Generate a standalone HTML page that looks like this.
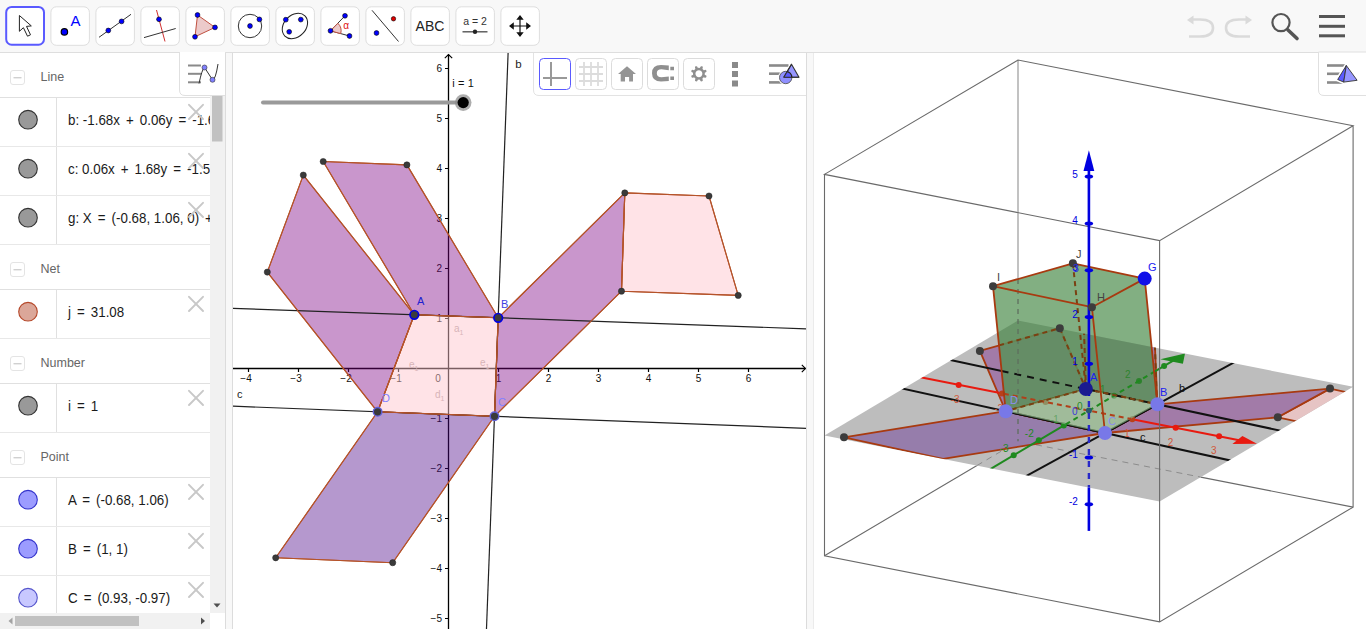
<!DOCTYPE html>
<html><head><meta charset="utf-8"><style>
html,body{margin:0;padding:0;width:1366px;height:631px;overflow:hidden;background:#fff}
svg{position:absolute;left:0;top:0;display:block}
</style></head><body>
<svg width="1366" height="631" viewBox="0 0 1366 631">
<rect x="0" y="0" width="1366" height="52" fill="#f8f8f8"/>
<rect x="0" y="52" width="1366" height="1" fill="#dedede"/>
<rect x="6.2" y="6.9" width="37.8" height="37.8" rx="5.5" fill="#fff" stroke="#5a5aff" stroke-width="2"/>
<rect x="50.9" y="6.8" width="38.5" height="38.5" rx="5.5" fill="#fff" stroke="#dedede" stroke-width="1"/>
<rect x="95.9" y="6.8" width="38.5" height="38.5" rx="5.5" fill="#fff" stroke="#dedede" stroke-width="1"/>
<rect x="140.9" y="6.8" width="38.5" height="38.5" rx="5.5" fill="#fff" stroke="#dedede" stroke-width="1"/>
<rect x="185.9" y="6.8" width="38.5" height="38.5" rx="5.5" fill="#fff" stroke="#dedede" stroke-width="1"/>
<rect x="230.9" y="6.8" width="38.5" height="38.5" rx="5.5" fill="#fff" stroke="#dedede" stroke-width="1"/>
<rect x="275.9" y="6.8" width="38.5" height="38.5" rx="5.5" fill="#fff" stroke="#dedede" stroke-width="1"/>
<rect x="320.9" y="6.8" width="38.5" height="38.5" rx="5.5" fill="#fff" stroke="#dedede" stroke-width="1"/>
<rect x="365.9" y="6.8" width="38.5" height="38.5" rx="5.5" fill="#fff" stroke="#dedede" stroke-width="1"/>
<rect x="410.9" y="6.8" width="38.5" height="38.5" rx="5.5" fill="#fff" stroke="#dedede" stroke-width="1"/>
<rect x="455.9" y="6.8" width="38.5" height="38.5" rx="5.5" fill="#fff" stroke="#dedede" stroke-width="1"/>
<rect x="500.9" y="6.8" width="38.5" height="38.5" rx="5.5" fill="#fff" stroke="#dedede" stroke-width="1"/>
<path d="M19.4 15.5 L19.4 31.3 L23.4 27.7 L27.5 36.2 L30.5 34.8 L26.5 26.4 L31.3 25.9 Z" fill="#fff" stroke="#222" stroke-width="1" stroke-linejoin="round"/>
<circle cx="64.4" cy="31.9" r="3.2" fill="#0000ff" stroke="#000" stroke-width="1.2"/>
<text x="75.6" y="25.8" font-family='"Liberation Sans", sans-serif' font-size="15" fill="#0000ff" text-anchor="middle">A</text>
<line x1="99" y1="37.3" x2="131" y2="14.3" stroke="#333" stroke-width="1"/>
<circle cx="108.3" cy="30.5" r="2.4" fill="#0000ff" stroke="#000" stroke-width="0.6"/>
<circle cx="121.6" cy="21.4" r="2.4" fill="#0000ff" stroke="#000" stroke-width="0.6"/>
<line x1="156.5" y1="10" x2="165" y2="41.5" stroke="#d03030" stroke-width="1"/>
<line x1="144" y1="37.6" x2="175.7" y2="28.5" stroke="#333" stroke-width="1"/>
<circle cx="159" cy="19.3" r="2.4" fill="#0000ff" stroke="#000" stroke-width="0.6"/>
<polygon points="197.5,15 215,27.4 195,36.8" fill="#eccaca" stroke="#c05040" stroke-width="1"/>
<circle cx="197.5" cy="15" r="2.4" fill="#0000ff" stroke="#000" stroke-width="0.6"/>
<circle cx="215" cy="27.4" r="2.4" fill="#0000ff" stroke="#000" stroke-width="0.6"/>
<circle cx="195" cy="36.8" r="2.4" fill="#0000ff" stroke="#000" stroke-width="0.6"/>
<circle cx="250" cy="26" r="11.7" fill="none" stroke="#333" stroke-width="1"/>
<circle cx="250" cy="26" r="2.4" fill="#0000ff" stroke="#000" stroke-width="0.6"/>
<circle cx="259.4" cy="19.4" r="2.4" fill="#0000ff" stroke="#000" stroke-width="0.6"/>
<ellipse cx="294.9" cy="26" rx="14.2" ry="10.9" transform="rotate(-45 294.9 26)" fill="none" stroke="#222" stroke-width="1"/>
<circle cx="285.8" cy="19.7" r="2.4" fill="#0000ff" stroke="#000" stroke-width="0.6"/>
<circle cx="300.8" cy="19.6" r="2.4" fill="#0000ff" stroke="#000" stroke-width="0.6"/>
<circle cx="289.2" cy="31.8" r="2.4" fill="#0000ff" stroke="#000" stroke-width="0.6"/>
<path d="M330.5 30.8 L345 15.8 M330.5 30.8 L349.5 36" stroke="#333" stroke-width="1" fill="none"/>
<path d="M330.5 30.8 L337.9 23.3 A10.5 10.5 0 0 1 340.7 33.6 Z" fill="#eccaca" stroke="#c05040" stroke-width="1"/>
<text x="343.3" y="28.7" font-family='"Liberation Sans", sans-serif' font-size="10" fill="#e01010">α</text>
<circle cx="330.5" cy="30.8" r="2.4" fill="#0000ff" stroke="#000" stroke-width="0.6"/>
<circle cx="345" cy="15.8" r="2.4" fill="#0000ff" stroke="#000" stroke-width="0.6"/>
<circle cx="349.5" cy="36" r="2.4" fill="#0000ff" stroke="#000" stroke-width="0.6"/>
<line x1="372" y1="10.3" x2="398.5" y2="41.5" stroke="#333" stroke-width="1"/>
<circle cx="376.5" cy="33" r="2.4" fill="#0000ff" stroke="#000" stroke-width="0.6"/>
<circle cx="393.5" cy="18.8" r="2.2" fill="#e00000" stroke="#000" stroke-width="0.6"/>
<text x="430" y="31" font-family='"Liberation Sans", sans-serif' font-size="14" fill="#222" text-anchor="middle">ABC</text>
<text x="475" y="24.5" font-family='"Liberation Sans", sans-serif' font-size="10.5" fill="#333" text-anchor="middle">a = 2</text>
<line x1="462.5" y1="31.8" x2="487.5" y2="31.8" stroke="#555" stroke-width="1.4"/>
<circle cx="475" cy="31.8" r="2.2" fill="#222"/>
<path d="M520 16.5 L520 35.5 M510.5 26 L529.5 26" stroke="#111" stroke-width="1.2"/>
<path d="M520 15 L516.3 19.8 L523.7 19.8 Z M520 37 L516.3 32.2 L523.7 32.2 Z M509 26 L513.8 22.3 L513.8 29.7 Z M531 26 L526.2 22.3 L526.2 29.7 Z" fill="#111"/>
<path d="M1190 19.5 L1200 19.5 Q1213 19.5 1213 28 Q1213 36.5 1200 36.5 L1189 36.5" fill="none" stroke="#dadada" stroke-width="2.6"/>
<path d="M1187 20 L1193.5 15.5 L1193.5 24.5 Z" fill="#dadada"/>
<path d="M1249 19.5 L1239 19.5 Q1226 19.5 1226 28 Q1226 36.5 1239 36.5 L1250 36.5" fill="none" stroke="#dadada" stroke-width="2.6"/>
<path d="M1252 20 L1245.5 15.5 L1245.5 24.5 Z" fill="#dadada"/>
<circle cx="1281" cy="22.6" r="8.6" fill="none" stroke="#555" stroke-width="2.2"/>
<line x1="1288" y1="30" x2="1297" y2="38.5" stroke="#555" stroke-width="3.6" stroke-linecap="round"/>
<rect x="1319" y="15.0" width="26" height="3" fill="#555"/>
<rect x="1319" y="24.8" width="26" height="3" fill="#555"/>
<rect x="1319" y="34.3" width="26" height="3" fill="#555"/>
<rect x="0" y="53" width="226" height="578" fill="#fff"/>
<defs><clipPath id="algclip"><rect x="0" y="53" width="210" height="560"/></clipPath></defs>
<g clip-path="url(#algclip)">
<rect x="10.5" y="70.5" width="14" height="14" rx="2.5" fill="#fff" stroke="#e4e4e4"/>
<rect x="13.5" y="77" width="8" height="1.4" fill="#d0d0d0"/>
<text x="40.5" y="81" font-family='"Liberation Sans", sans-serif' font-size="12.5" fill="#666">Line</text>
<rect x="0" y="97" width="210" height="1" fill="#e0e0e0"/>
<circle cx="28" cy="119.7" r="9.3" fill="#999" stroke="#333" stroke-width="1.1"/>
<rect x="56" y="98" width="1" height="48" fill="#e0e0e0"/>
<text transform="translate(68 124.8) scale(0.89 1)" x="0" y="0" font-family='"Liberation Sans", sans-serif' font-size="15" fill="#1a1a1a">b: -1.68x <tspan dx="2.6">+</tspan><tspan dx="2.6"> </tspan>0.06y <tspan dx="2.6">=</tspan><tspan dx="2.6"> </tspan>-1.6</text>
<rect x="0" y="146" width="210" height="1" fill="#e8e8e8"/>
<path d="M189 104.8 L203 119 M203 104.8 L189 119" stroke="#c8c8c8" stroke-width="1.9" stroke-linecap="round"/>
<circle cx="28" cy="168.7" r="9.3" fill="#999" stroke="#333" stroke-width="1.1"/>
<rect x="56" y="147" width="1" height="48" fill="#e0e0e0"/>
<text transform="translate(68 173.8) scale(0.89 1)" x="0" y="0" font-family='"Liberation Sans", sans-serif' font-size="15" fill="#1a1a1a">c: 0.06x <tspan dx="2.6">+</tspan><tspan dx="2.6"> </tspan>1.68y <tspan dx="2.6">=</tspan><tspan dx="2.6"> </tspan>-1.57</text>
<rect x="0" y="195" width="210" height="1" fill="#e8e8e8"/>
<path d="M189 153.8 L203 168 M203 153.8 L189 168" stroke="#c8c8c8" stroke-width="1.9" stroke-linecap="round"/>
<circle cx="28" cy="217.7" r="9.3" fill="#999" stroke="#333" stroke-width="1.1"/>
<rect x="56" y="196" width="1" height="48" fill="#e0e0e0"/>
<text transform="translate(68 222.8) scale(0.89 1)" x="0" y="0" font-family='"Liberation Sans", sans-serif' font-size="15" fill="#1a1a1a">g: X <tspan dx="2.6">=</tspan><tspan dx="2.6"> </tspan>(-0.68, 1.06, 0) <tspan dx="2.6">+</tspan><tspan dx="2.6"> </tspan>λ</text>
<rect x="0" y="244" width="210" height="1" fill="#e8e8e8"/>
<path d="M189 202.8 L203 217 M203 202.8 L189 217" stroke="#c8c8c8" stroke-width="1.9" stroke-linecap="round"/>
<rect x="10.5" y="262.5" width="14" height="14" rx="2.5" fill="#fff" stroke="#e4e4e4"/>
<rect x="13.5" y="269" width="8" height="1.4" fill="#d0d0d0"/>
<text x="40.5" y="273" font-family='"Liberation Sans", sans-serif' font-size="12.5" fill="#666">Net</text>
<rect x="0" y="289" width="210" height="1" fill="#e0e0e0"/>
<circle cx="28" cy="311.7" r="9.3" fill="#dba799" stroke="#b5482a" stroke-width="1.1"/>
<rect x="56" y="290" width="1" height="48" fill="#e0e0e0"/>
<text transform="translate(68 316.8) scale(0.89 1)" x="0" y="0" font-family='"Liberation Sans", sans-serif' font-size="15" fill="#1a1a1a">j <tspan dx="2.6">=</tspan><tspan dx="2.6"> </tspan>31.08</text>
<rect x="0" y="338" width="210" height="1" fill="#e8e8e8"/>
<path d="M189 296.8 L203 311 M203 296.8 L189 311" stroke="#c8c8c8" stroke-width="1.9" stroke-linecap="round"/>
<rect x="10.5" y="356.5" width="14" height="14" rx="2.5" fill="#fff" stroke="#e4e4e4"/>
<rect x="13.5" y="363" width="8" height="1.4" fill="#d0d0d0"/>
<text x="40.5" y="367" font-family='"Liberation Sans", sans-serif' font-size="12.5" fill="#666">Number</text>
<rect x="0" y="383" width="210" height="1" fill="#e0e0e0"/>
<circle cx="28" cy="405.7" r="9.3" fill="#999" stroke="#333" stroke-width="1.1"/>
<rect x="56" y="384" width="1" height="48" fill="#e0e0e0"/>
<text transform="translate(68 410.8) scale(0.89 1)" x="0" y="0" font-family='"Liberation Sans", sans-serif' font-size="15" fill="#1a1a1a">i <tspan dx="2.6">=</tspan><tspan dx="2.6"> </tspan>1</text>
<rect x="0" y="432" width="210" height="1" fill="#e8e8e8"/>
<path d="M189 390.8 L203 405 M203 390.8 L189 405" stroke="#c8c8c8" stroke-width="1.9" stroke-linecap="round"/>
<rect x="10.5" y="450.5" width="14" height="14" rx="2.5" fill="#fff" stroke="#e4e4e4"/>
<rect x="13.5" y="457" width="8" height="1.4" fill="#d0d0d0"/>
<text x="40.5" y="461" font-family='"Liberation Sans", sans-serif' font-size="12.5" fill="#666">Point</text>
<rect x="0" y="477" width="210" height="1" fill="#e0e0e0"/>
<circle cx="28" cy="499.7" r="9.3" fill="#9c9cff" stroke="#3333cc" stroke-width="1.1"/>
<rect x="56" y="478" width="1" height="48" fill="#e0e0e0"/>
<text transform="translate(68 504.8) scale(0.89 1)" x="0" y="0" font-family='"Liberation Sans", sans-serif' font-size="15" fill="#1a1a1a">A <tspan dx="2.6">=</tspan><tspan dx="2.6"> </tspan>(-0.68, 1.06)</text>
<rect x="0" y="526" width="210" height="1" fill="#e8e8e8"/>
<path d="M189 484.8 L203 499 M203 484.8 L189 499" stroke="#c8c8c8" stroke-width="1.9" stroke-linecap="round"/>
<circle cx="28" cy="548.7" r="9.3" fill="#9c9cff" stroke="#3333cc" stroke-width="1.1"/>
<rect x="56" y="527" width="1" height="48" fill="#e0e0e0"/>
<text transform="translate(68 553.8) scale(0.89 1)" x="0" y="0" font-family='"Liberation Sans", sans-serif' font-size="15" fill="#1a1a1a">B <tspan dx="2.6">=</tspan><tspan dx="2.6"> </tspan>(1, 1)</text>
<rect x="0" y="575" width="210" height="1" fill="#e8e8e8"/>
<path d="M189 533.8 L203 548 M203 533.8 L189 548" stroke="#c8c8c8" stroke-width="1.9" stroke-linecap="round"/>
<circle cx="28" cy="597.7" r="9.3" fill="#c8c8ff" stroke="#5555cc" stroke-width="1.1"/>
<rect x="56" y="576" width="1" height="48" fill="#e0e0e0"/>
<text transform="translate(68 602.8) scale(0.89 1)" x="0" y="0" font-family='"Liberation Sans", sans-serif' font-size="15" fill="#1a1a1a">C <tspan dx="2.6">=</tspan><tspan dx="2.6"> </tspan>(0.93, -0.97)</text>
<rect x="0" y="624" width="210" height="1" fill="#e8e8e8"/>
<path d="M189 582.8 L203 597 M203 582.8 L189 597" stroke="#c8c8c8" stroke-width="1.9" stroke-linecap="round"/>
</g>
<rect x="210" y="53" width="16" height="560" fill="#f1f1f1"/>
<rect x="212" y="95" width="10.5" height="46.5" fill="#c1c1c1"/>
<path d="M213.5 603.5 L220.5 603.5 L217 607.5 Z" fill="#505050"/>
<rect x="0" y="613" width="210" height="16" fill="#f1f1f1"/>
<rect x="15" y="616" width="124" height="10" fill="#c1c1c1"/>
<path d="M8.5 621 L12.5 617.5 L12.5 624.5 Z" fill="#a3a3a3"/>
<path d="M205 621 L201 617.5 L201 624.5 Z" fill="#505050"/>
<rect x="210" y="613" width="16" height="18" fill="#fff"/>
<path d="M179.5 52 L179.5 90 Q179.5 95.5 185 95.5 L225.5 95.5 L225.5 52" fill="#fff" stroke="#e0e0e0" stroke-width="1"/>
<rect x="188" y="64.5" width="13" height="2" fill="#8a8a8a"/>
<rect x="188" y="72.8" width="13" height="2" fill="#8a8a8a"/>
<rect x="188" y="81.3" width="13" height="2" fill="#8a8a8a"/>
<path d="M199 83.5 Q202 69 204.5 67.5 L212.5 79.8 Q215.5 80 218 64" fill="none" stroke="#333" stroke-width="1"/>
<circle cx="204.5" cy="67.5" r="2.5" fill="#8080ff" stroke="#333" stroke-width="0.6"/>
<circle cx="212.5" cy="79.8" r="2.5" fill="#8080ff" stroke="#333" stroke-width="0.6"/>
<rect x="225" y="53" width="1" height="576" fill="#dcdcdc"/>
<rect x="226" y="53" width="6.5" height="576" fill="#f8f8f8"/>
<rect x="232" y="53" width="1" height="576" fill="#dcdcdc"/>
<defs><clipPath id="gclip"><rect x="233" y="53" width="573" height="576"/></clipPath></defs>
<g clip-path="url(#gclip)">
<rect x="233" y="53" width="573" height="578" fill="#fff"/>
<line x1="233" y1="368.5" x2="805.5" y2="368.5" stroke="#000" stroke-width="1.3"/>
<line x1="448.5" y1="631" x2="448.5" y2="54.5" stroke="#000" stroke-width="1.3"/>
<path d="M801.8 364.8 L805.5 368.5 L801.8 372.2 M444.8 58.2 L448.5 54.5 L452.2 58.2" fill="none" stroke="#000" stroke-width="1.1"/>
<path d="M248.5 368.5 L248.5 372.0 M298.5 368.5 L298.5 372.0 M348.5 368.5 L348.5 372.0 M398.5 368.5 L398.5 372.0 M498.5 368.5 L498.5 372.0 M548.5 368.5 L548.5 372.0 M598.5 368.5 L598.5 372.0 M648.5 368.5 L648.5 372.0 M698.5 368.5 L698.5 372.0 M748.5 368.5 L748.5 372.0 M448.5 618.5 L445.0 618.5 M448.5 568.5 L445.0 568.5 M448.5 518.5 L445.0 518.5 M448.5 468.5 L445.0 468.5 M448.5 418.5 L445.0 418.5 M448.5 318.5 L445.0 318.5 M448.5 268.5 L445.0 268.5 M448.5 218.5 L445.0 218.5 M448.5 168.5 L445.0 168.5 M448.5 118.5 L445.0 118.5 M448.5 68.5 L445.0 68.5" stroke="#000" stroke-width="1.2"/>
<text x="246.0" y="382" font-family='"Liberation Sans", sans-serif' font-size="10" fill="#111" text-anchor="middle">−4</text>
<text x="296.0" y="382" font-family='"Liberation Sans", sans-serif' font-size="10" fill="#111" text-anchor="middle">−3</text>
<text x="346.0" y="382" font-family='"Liberation Sans", sans-serif' font-size="10" fill="#111" text-anchor="middle">−2</text>
<text x="396.0" y="382" font-family='"Liberation Sans", sans-serif' font-size="10" fill="#111" text-anchor="middle">−1</text>
<text x="498.5" y="382" font-family='"Liberation Sans", sans-serif' font-size="10" fill="#111" text-anchor="middle">1</text>
<text x="548.5" y="382" font-family='"Liberation Sans", sans-serif' font-size="10" fill="#111" text-anchor="middle">2</text>
<text x="598.5" y="382" font-family='"Liberation Sans", sans-serif' font-size="10" fill="#111" text-anchor="middle">3</text>
<text x="648.5" y="382" font-family='"Liberation Sans", sans-serif' font-size="10" fill="#111" text-anchor="middle">4</text>
<text x="698.5" y="382" font-family='"Liberation Sans", sans-serif' font-size="10" fill="#111" text-anchor="middle">5</text>
<text x="748.5" y="382" font-family='"Liberation Sans", sans-serif' font-size="10" fill="#111" text-anchor="middle">6</text>
<text x="438" y="382" font-family='"Liberation Sans", sans-serif' font-size="10" fill="#111" text-anchor="middle">0</text>
<text x="442" y="622.1" font-family='"Liberation Sans", sans-serif' font-size="10" fill="#111" text-anchor="end">−5</text>
<text x="442" y="572.1" font-family='"Liberation Sans", sans-serif' font-size="10" fill="#111" text-anchor="end">−4</text>
<text x="442" y="522.1" font-family='"Liberation Sans", sans-serif' font-size="10" fill="#111" text-anchor="end">−3</text>
<text x="442" y="472.1" font-family='"Liberation Sans", sans-serif' font-size="10" fill="#111" text-anchor="end">−2</text>
<text x="442" y="422.1" font-family='"Liberation Sans", sans-serif' font-size="10" fill="#111" text-anchor="end">−1</text>
<text x="442" y="322.1" font-family='"Liberation Sans", sans-serif' font-size="10" fill="#111" text-anchor="end">1</text>
<text x="442" y="272.1" font-family='"Liberation Sans", sans-serif' font-size="10" fill="#111" text-anchor="end">2</text>
<text x="442" y="222.1" font-family='"Liberation Sans", sans-serif' font-size="10" fill="#111" text-anchor="end">3</text>
<text x="442" y="172.1" font-family='"Liberation Sans", sans-serif' font-size="10" fill="#111" text-anchor="end">4</text>
<text x="442" y="122.1" font-family='"Liberation Sans", sans-serif' font-size="10" fill="#111" text-anchor="end">5</text>
<text x="442" y="72.1" font-family='"Liberation Sans", sans-serif' font-size="10" fill="#111" text-anchor="end">6</text>
<polygon points="414.3,314.8 377.6,411.8 267.3,272.1 303.3,175.1" fill="rgb(123,1,131)" fill-opacity="0.41" stroke="#b5532a" stroke-width="1.1" stroke-linejoin="round"/>
<polygon points="414.3,314.8 498.2,317.8 406.9,164.9 323.2,161.5" fill="rgb(123,1,131)" fill-opacity="0.41" stroke="#b5532a" stroke-width="1.1" stroke-linejoin="round"/>
<polygon points="498.2,317.8 624.8,192.9 621.5,291.2 494.5,416.3" fill="rgb(123,1,131)" fill-opacity="0.41" stroke="#b5532a" stroke-width="1.1" stroke-linejoin="round"/>
<polygon points="624.8,192.9 709.0,196.0 738.2,295.4 621.5,291.2" fill="rgb(255,197,205)" fill-opacity="0.48" stroke="#b5532a" stroke-width="1.1" stroke-linejoin="round"/>
<polygon points="377.6,411.8 494.5,416.3 392.7,562.7 275.7,557.8" fill="rgb(75,6,135)" fill-opacity="0.41" stroke="#b5532a" stroke-width="1.1" stroke-linejoin="round"/>
<polygon points="414.3,314.8 498.2,317.8 494.5,416.3 377.6,411.8" fill="rgb(255,197,205)" fill-opacity="0.48" stroke="#b5532a" stroke-width="1.1" stroke-linejoin="round"/>
<line x1="233.0" y1="308.3" x2="806.0" y2="328.8" stroke="#222" stroke-width="1.2"/>
<line x1="233.0" y1="406.2" x2="806.0" y2="428.3" stroke="#222" stroke-width="1.2"/>
<line x1="508.1" y1="53.0" x2="486.4" y2="631.0" stroke="#222" stroke-width="1.2"/>
<polygon points="414.3,314.8 377.6,411.8 267.3,272.1 303.3,175.1" fill="none" stroke="#b5532a" stroke-width="1.1" stroke-linejoin="round"/>
<polygon points="414.3,314.8 498.2,317.8 406.9,164.9 323.2,161.5" fill="none" stroke="#b5532a" stroke-width="1.1" stroke-linejoin="round"/>
<polygon points="498.2,317.8 624.8,192.9 621.5,291.2 494.5,416.3" fill="none" stroke="#b5532a" stroke-width="1.1" stroke-linejoin="round"/>
<polygon points="624.8,192.9 709.0,196.0 738.2,295.4 621.5,291.2" fill="none" stroke="#b5532a" stroke-width="1.1" stroke-linejoin="round"/>
<polygon points="377.6,411.8 494.5,416.3 392.7,562.7 275.7,557.8" fill="none" stroke="#b5532a" stroke-width="1.1" stroke-linejoin="round"/>
<polygon points="414.3,314.8 498.2,317.8 494.5,416.3 377.6,411.8" fill="none" stroke="#b5532a" stroke-width="1.1" stroke-linejoin="round"/>
<text x="515.2" y="68.2" font-family='"Liberation Sans", sans-serif' font-size="11.5" fill="#222">b</text>
<text x="237" y="398" font-family='"Liberation Sans", sans-serif' font-size="11" fill="#222">c</text>
<text x="454" y="332" font-family='"Liberation Sans", sans-serif' font-size="10" fill="#d7b4b8">a<tspan font-size="7" dy="3">1</tspan></text>
<text x="409" y="368" font-family='"Liberation Sans", sans-serif' font-size="10" fill="#d7b4b8">e<tspan font-size="7" dy="3">1</tspan></text>
<text x="480" y="366" font-family='"Liberation Sans", sans-serif' font-size="10" fill="#d7b4b8">e<tspan font-size="7" dy="3">1</tspan></text>
<text x="435" y="398" font-family='"Liberation Sans", sans-serif' font-size="10" fill="#d7b4b8">d<tspan font-size="7" dy="3">1</tspan></text>
<line x1="263" y1="102.5" x2="463" y2="102.5" stroke="#9a9a9a" stroke-width="4" stroke-linecap="round"/>
<circle cx="463.2" cy="102.6" r="8.3" fill="#8a8a8a" fill-opacity="0.7"/>
<circle cx="463.2" cy="102.6" r="5.6" fill="#000"/>
<text x="452.3" y="86.6" font-family='"Liberation Sans", sans-serif' font-size="11" fill="#111" textLength="21.5" lengthAdjust="spacing">i = 1</text>
<circle cx="303.3" cy="175.1" r="3.1" fill="#3a3a3a" stroke="#222" stroke-width="0.5"/>
<circle cx="267.3" cy="272.1" r="3.1" fill="#3a3a3a" stroke="#222" stroke-width="0.5"/>
<circle cx="323.2" cy="161.5" r="3.1" fill="#3a3a3a" stroke="#222" stroke-width="0.5"/>
<circle cx="406.9" cy="164.9" r="3.1" fill="#3a3a3a" stroke="#222" stroke-width="0.5"/>
<circle cx="624.8" cy="192.9" r="3.1" fill="#3a3a3a" stroke="#222" stroke-width="0.5"/>
<circle cx="709" cy="196" r="3.1" fill="#3a3a3a" stroke="#222" stroke-width="0.5"/>
<circle cx="738.2" cy="295.4" r="3.1" fill="#3a3a3a" stroke="#222" stroke-width="0.5"/>
<circle cx="621.5" cy="291.2" r="3.1" fill="#3a3a3a" stroke="#222" stroke-width="0.5"/>
<circle cx="275.7" cy="557.8" r="3.1" fill="#3a3a3a" stroke="#222" stroke-width="0.5"/>
<circle cx="392.7" cy="562.7" r="3.1" fill="#3a3a3a" stroke="#222" stroke-width="0.5"/>
<circle cx="414.3" cy="314.8" r="4.3" fill="#3c3c3c" stroke="#0000e0" stroke-width="1.7"/>
<circle cx="498.2" cy="317.8" r="4.3" fill="#3c3c3c" stroke="#0000e0" stroke-width="1.7"/>
<circle cx="494.5" cy="416.3" r="4.3" fill="#3a3a3a" stroke="#6060d8" stroke-width="1.4"/>
<circle cx="377.6" cy="411.8" r="4.3" fill="#3a3a3a" stroke="#6060d8" stroke-width="1.4"/>
<text x="417" y="305" font-family='"Liberation Sans", sans-serif' font-size="11" fill="#2020d0">A</text>
<text x="501" y="308" font-family='"Liberation Sans", sans-serif' font-size="11" fill="#4040e0">B</text>
<text x="498" y="406" font-family='"Liberation Sans", sans-serif' font-size="11" fill="#8080ff">C</text>
<text x="382" y="402" font-family='"Liberation Sans", sans-serif' font-size="11" fill="#8080ff">D</text>
</g>
<path d="M533.5 53 L533.5 90 Q533.5 95.5 539 95.5 L806 95.5" fill="#fff" stroke="#e3e3e3" stroke-width="1"/>
<rect x="539.5" y="58.5" width="31" height="31" rx="4" fill="#fff" stroke="#5a5aff" stroke-width="1"/>
<rect x="575.5" y="58.5" width="31" height="31" rx="4" fill="#fff" stroke="#dcdcdc" stroke-width="1"/>
<rect x="611.5" y="58.5" width="31" height="31" rx="4" fill="#fff" stroke="#dcdcdc" stroke-width="1"/>
<rect x="647.5" y="58.5" width="31" height="31" rx="4" fill="#fff" stroke="#dcdcdc" stroke-width="1"/>
<rect x="683.5" y="58.5" width="31" height="31" rx="4" fill="#fff" stroke="#dcdcdc" stroke-width="1"/>
<path d="M551 62 L551 86 M543 78 L567 78" stroke="#999" stroke-width="2"/>
<path d="M584 62 L584 86 M591 62 L591 86 M598 62 L598 86 M579 67 L603 67 M579 74 L603 74 M579 81 L603 81" stroke="#dcdcdc" stroke-width="1.8"/>
<path d="M627 66.3 L618 73.9 L620.7 73.9 L620.7 81.6 L625 81.6 L625 76.9 L629.1 76.9 L629.1 81.6 L633 81.6 L633 73.9 L636 73.9 Z" fill="#959595"/>
<path d="M668.8 65.6 L661 65.1 Q652 65.1 652 73.3 Q652 81.6 661 81.6 L668.8 81 L668.8 76.4 L661.5 77.3 Q656.8 77.3 656.8 73.3 Q656.8 69.2 661.5 69.2 L668.8 70.2 Z" fill="#8f8f8f"/>
<path d="M670.3 66.8 h3.7 v3.5 h-3.7z M670.3 76.4 h3.7 v3.5 h-3.7z" fill="#8f8f8f"/>
<g transform="translate(698.9 73.8)"><circle r="4.7" fill="none" stroke="#8f8f8f" stroke-width="2.5"/><rect x="-1.3" y="-8.1" width="2.6" height="4" rx="1.2" fill="#8f8f8f" transform="rotate(22.5)"/><rect x="-1.3" y="-8.1" width="2.6" height="4" rx="1.2" fill="#8f8f8f" transform="rotate(67.5)"/><rect x="-1.3" y="-8.1" width="2.6" height="4" rx="1.2" fill="#8f8f8f" transform="rotate(112.5)"/><rect x="-1.3" y="-8.1" width="2.6" height="4" rx="1.2" fill="#8f8f8f" transform="rotate(157.5)"/><rect x="-1.3" y="-8.1" width="2.6" height="4" rx="1.2" fill="#8f8f8f" transform="rotate(202.5)"/><rect x="-1.3" y="-8.1" width="2.6" height="4" rx="1.2" fill="#8f8f8f" transform="rotate(247.5)"/><rect x="-1.3" y="-8.1" width="2.6" height="4" rx="1.2" fill="#8f8f8f" transform="rotate(292.5)"/><rect x="-1.3" y="-8.1" width="2.6" height="4" rx="1.2" fill="#8f8f8f" transform="rotate(337.5)"/></g>
<rect x="732" y="62" width="6" height="6" fill="#8a8a8a"/><rect x="732" y="71" width="6" height="6" fill="#8a8a8a"/><rect x="732" y="80.5" width="6" height="6" fill="#8a8a8a"/>
<rect x="769" y="64.2" width="19.5" height="2.6" fill="#8a8a8a"/><rect x="769" y="72.4" width="14" height="2.6" fill="#8a8a8a"/><rect x="769" y="81.1" width="14" height="2.6" fill="#8a8a8a"/>
<circle cx="785.7" cy="77.5" r="7.6" fill="#fff"/>
<polygon points="791.5,64.2 783.8,77.3 799,77.3" fill="#fff" stroke="#fff" stroke-width="3" stroke-linejoin="round"/>
<circle cx="785.7" cy="77.5" r="6.2" fill="#9090ff" stroke="#555" stroke-width="0.9"/>
<polygon points="791.5,64.2 783.8,77.3 799,77.3" fill="#9696ff" stroke="#333" stroke-width="1.1" stroke-linejoin="round"/>
<defs><clipPath id="tclip"><polygon points="791.5,64.2 783.8,77.3 799,77.3"/></clipPath></defs>
<circle cx="785.7" cy="77.5" r="5.6" fill="#5a5aff" clip-path="url(#tclip)"/>
<path d="M783.8 77.3 L799 77.3 M791.5 64.2 L783.8 77.3" stroke="#333" stroke-width="1.1" fill="none"/>
<circle cx="785.7" cy="77.5" r="6.2" stroke="#222" stroke-width="1.3" fill="none" clip-path="url(#tclip)"/>
<rect x="806" y="53" width="1" height="576" fill="#dcdcdc"/>
<rect x="807" y="53" width="6.5" height="576" fill="#f8f8f8"/>
<rect x="813.5" y="53" width="1" height="576" fill="#dcdcdc"/>
<defs><clipPath id="v3clip"><rect x="814" y="53" width="552" height="576"/></clipPath>
<clipPath id="plclip"><polygon points="824.5,435.4 1159.6,501.6 1353.1,386.8 1018.0,320.6"/></clipPath></defs>
<g clip-path="url(#v3clip)">
<rect x="814" y="53" width="552" height="578" fill="#fff"/>
<path d="M1018 60 L1018 279" stroke="#a8a8a8" stroke-width="1.4" fill="none"/>
<path d="M824.5 555.7 L977 465.5 M1200.7 477.1 L1353.1 507.1" stroke="#6a6a6a" stroke-width="1.1" fill="none"/>
<polygon points="824.5,435.4 1159.6,501.6 1353.1,386.8 1018.0,320.6" fill="#bdbdbd"/>
<path d="M977 465.5 L1018 441.3 L1200.7 477.1" stroke="#8c8c8c" stroke-width="1" stroke-dasharray="6 5" fill="none"/>
<mask id="outbox" maskUnits="userSpaceOnUse" x="814" y="53" width="552" height="578"><rect x="814" y="53" width="552" height="578" fill="#fff"/><polygon points="993.0,286.2 1072.9,263.3 1144.7,278.6 1157.4,404.3 1105.0,433.0 1005.7,411.2" fill="#000"/></mask>
<mask id="dimbox" maskUnits="userSpaceOnUse" x="814" y="53" width="552" height="578"><rect x="814" y="53" width="552" height="578" fill="#fff"/><polygon points="993.0,286.2 1072.9,263.3 1144.7,278.6 1157.4,404.3 1105.0,433.0 1005.7,411.2" fill="#555"/></mask>
<g clip-path="url(#plclip)"><g mask="url(#dimbox)">
<polygon points="1330.0,388.6 1401.5,404.0 1377.1,438.5 1277.8,417.3" fill="#e6c4c4" stroke="#a83a10" stroke-width="1.8"/>
<polygon points="1005.7,411.2 1105.0,433.0 943.1,458.8 844.0,437.3" fill="#967dab" stroke="#a83a10" stroke-width="1.8" stroke-linejoin="round"/>
<polygon points="1157.4,404.3 1330.0,388.6 1277.8,417.3 1105.0,433.0" fill="#a27ba8" stroke="#a83a10" stroke-width="1.8" stroke-linejoin="round"/>
<polygon points="1085.9,389.0 1005.7,411.2 979.9,350.9 1059.8,328.2" fill="#a27ba8" stroke="#a83a10" stroke-width="1.8" stroke-linejoin="round"/>
<polygon points="1085.9,389.0 1157.4,404.3 1154.8,342.9 1083.9,327.5" fill="#a27ba8" stroke="#a83a10" stroke-width="1.8" stroke-linejoin="round"/>
</g>
<polygon points="1085.9,389.0 1157.4,404.3 1105.0,433.0 1005.7,411.2" fill="#f2dede" stroke="#a83a10" stroke-width="1.8"/>
</g>
<g clip-path="url(#plclip)"><g mask="url(#outbox)">
<line x1="657.4" y1="297.2" x2="1514.5" y2="480.8" stroke="#111" stroke-width="2"/>
<line x1="410.2" y1="280.5" x2="1601.2" y2="541.9" stroke="#111" stroke-width="2"/>
<line x1="790.5" y1="605.2" x2="1419.4" y2="260.8" stroke="#111" stroke-width="2"/>
</g></g>
<path d="M1005.7 411.2 L1105.0 433.0 L1157.4 404.3" stroke="#111" stroke-width="2" fill="none"/>
<g clip-path="url(#plclip)">
<line x1="906.6" y1="374.6" x2="1003.9" y2="393.8" stroke="#e81a10" stroke-width="2"/>
<line x1="1131.0" y1="418.9" x2="1244.3" y2="441.3" stroke="#e81a10" stroke-width="2"/>
<line x1="983.6" y1="473.1" x2="1065.7" y2="424.4" stroke="#1f8a1f" stroke-width="2"/>
<line x1="1154.1" y1="371.9" x2="1176.6" y2="358.6" stroke="#1f8a1f" stroke-width="2"/>
<polygon points="1257.0,443.8 1242.4,436.0 1232.4,443.9" fill="#e81a10"/>
<polygon points="1185.0,353.6 1160.3,359.3 1182.9,363.8" fill="#1f8a1f"/>
</g>
<circle cx="958.7" cy="384.9" r="3" fill="#e81a10"/>
<circle cx="1013.7" cy="455.2" r="3" fill="#1f8a1f"/>
<circle cx="1002.1" cy="393.5" r="3" fill="#b8401a"/>
<circle cx="1038.8" cy="440.3" r="3" fill="#1f8a1f"/>
<circle cx="1045.5" cy="402.0" r="3" fill="#b8401a"/>
<circle cx="1063.8" cy="425.5" r="3" fill="#1f8a1f"/>
<circle cx="1132.3" cy="419.2" r="3" fill="#b8401a"/>
<circle cx="1114.0" cy="395.7" r="3" fill="#2a7a2a"/>
<circle cx="1175.7" cy="427.8" r="3" fill="#e81a10"/>
<circle cx="1139.0" cy="380.9" r="3" fill="#1f8a1f"/>
<circle cx="1219.1" cy="436.3" r="3" fill="#e81a10"/>
<circle cx="1164.1" cy="366.0" r="3" fill="#1f8a1f"/>
<text x="950.7" y="402.9" font-family='"Liberation Sans", sans-serif' font-size="10" fill="#d0583a">-3</text>
<text x="994.1" y="411.5" font-family='"Liberation Sans", sans-serif' font-size="10" fill="#d0583a">-2</text>
<text x="1124.3" y="437.2" font-family='"Liberation Sans", sans-serif' font-size="10" fill="#d0583a">1</text>
<text x="1167.7" y="445.8" font-family='"Liberation Sans", sans-serif' font-size="10" fill="#d0583a">2</text>
<text x="1211.1" y="454.3" font-family='"Liberation Sans", sans-serif' font-size="10" fill="#d0583a">3</text>
<text x="999.7" y="452.2" font-family='"Liberation Sans", sans-serif' font-size="10" fill="#1f8a1f">-3</text>
<text x="1024.8" y="437.3" font-family='"Liberation Sans", sans-serif' font-size="10" fill="#1f8a1f">-2</text>
<text x="1049.8" y="422.5" font-family='"Liberation Sans", sans-serif' font-size="10" fill="#1f8a1f">-1</text>
<text x="1100.0" y="392.7" font-family='"Liberation Sans", sans-serif' font-size="10" fill="#1f8a1f">1</text>
<text x="1125.0" y="377.9" font-family='"Liberation Sans", sans-serif' font-size="10" fill="#1f8a1f">2</text>
<polygon points="993.0,286.2 1072.9,263.3 1144.7,278.6 1157.4,404.3 1105.0,433.0 1005.7,411.2" fill="#357e35" fill-opacity="0.62"/>
<polygon points="1085.9,389.0 1157.4,404.3 1105.0,433.0 1005.7,411.2" fill="#fff" fill-opacity="0.27"/>
<line x1="1003.9" y1="393.8" x2="1131.0" y2="418.9" stroke="#b0401a" stroke-width="2" stroke-dasharray="5 4"/>
<line x1="1065.7" y1="424.4" x2="1154.1" y2="371.9" stroke="#1f8a1f" stroke-width="2" stroke-dasharray="5 4"/>
<line x1="1001.6" y1="371.1" x2="1157.4" y2="404.3" stroke="#111" stroke-width="2" stroke-dasharray="7 6"/>
<line x1="1018.0" y1="279.0" x2="1018.0" y2="441.3" stroke="#5f6f5f" stroke-width="1.3" stroke-dasharray="5 5"/>
<line x1="999.1" y1="345.4" x2="1059.8" y2="328.2" stroke="#7a4012" stroke-width="2" stroke-dasharray="5 4"/>
<line x1="1059.8" y1="328.2" x2="1085.9" y2="389.0" stroke="#7a4012" stroke-width="2" stroke-dasharray="5 4"/>
<line x1="1085.9" y1="389.0" x2="1084.1" y2="333.7" stroke="#7a4012" stroke-width="2" stroke-dasharray="5 4"/>
<line x1="1156.9" y1="404.3" x2="1155.0" y2="347.7" stroke="#7a4012" stroke-width="2" stroke-dasharray="5 4"/>
<line x1="1085.9" y1="389.0" x2="1005.7" y2="411.2" stroke="#7a4012" stroke-width="2" stroke-dasharray="5 4"/>
<line x1="1085.9" y1="389.0" x2="1157.4" y2="404.3" stroke="#7a4012" stroke-width="2" stroke-dasharray="5 4"/>
<line x1="1072.9" y1="263.3" x2="1085.9" y2="389.0" stroke="#7a4012" stroke-width="2" stroke-dasharray="5 4"/>
<path d="M993 286.2 L1005.7 411.2 M1091.9 307.2 L1105.0 433.0 M1144.7 278.6 L1157.4 404.3 M993 286.2 L1072.9 263.3 L1144.7 278.6 L1091.9 307.2 Z" stroke="#a83a10" stroke-width="1.8" fill="none" stroke-linejoin="round"/>
<circle cx="1088.9" cy="410.6" r="3" fill="#2a5a6a"/>
<path d="M824.5 174.4 L1018 60 L1353.1 125.8 L1159.6 240.6 Z M824.5 174.4 L824.5 555.7 L1159.6 621.9 L1353.1 507.1 L1353.1 125.8 M1159.6 240.6 L1159.6 621.9" stroke="#6a6a6a" stroke-width="1.1" fill="none"/>
<line x1="1088.9" y1="170" x2="1088.9" y2="396" stroke="#0000e0" stroke-width="2.6"/>
<line x1="1088.9" y1="401" x2="1088.9" y2="487.6" stroke="#2828c8" stroke-width="2.4" stroke-dasharray="6 6"/>
<line x1="1088.9" y1="487.6" x2="1088.9" y2="530.9" stroke="#0000e0" stroke-width="2.6"/>
<polygon points="1088.9,150.3 1083.5,171 1094.3000000000002,171" fill="#0000e0"/>
<ellipse cx="1088.9" cy="504.2" rx="4.2" ry="2" fill="#0000e0"/>
<text x="1077.9" y="505.2" font-family='"Liberation Sans", sans-serif' font-size="10" fill="#0000e0" text-anchor="end">-2</text>
<ellipse cx="1088.9" cy="457.4" rx="4.2" ry="2" fill="#0000e0"/>
<text x="1077.9" y="458.4" font-family='"Liberation Sans", sans-serif' font-size="10" fill="#0000e0" text-anchor="end">-1</text>
<ellipse cx="1088.9" cy="363.8" rx="4.2" ry="2" fill="#0000e0"/>
<text x="1077.9" y="364.8" font-family='"Liberation Sans", sans-serif' font-size="10" fill="#0000e0" text-anchor="end">1</text>
<ellipse cx="1088.9" cy="317.0" rx="4.2" ry="2" fill="#0000e0"/>
<text x="1077.9" y="318.0" font-family='"Liberation Sans", sans-serif' font-size="10" fill="#0000e0" text-anchor="end">2</text>
<ellipse cx="1088.9" cy="270.2" rx="4.2" ry="2" fill="#0000e0"/>
<text x="1077.9" y="271.2" font-family='"Liberation Sans", sans-serif' font-size="10" fill="#0000e0" text-anchor="end">3</text>
<ellipse cx="1088.9" cy="223.4" rx="4.2" ry="2" fill="#0000e0"/>
<text x="1077.9" y="224.4" font-family='"Liberation Sans", sans-serif' font-size="10" fill="#0000e0" text-anchor="end">4</text>
<ellipse cx="1088.9" cy="176.6" rx="4.2" ry="2" fill="#0000e0"/>
<text x="1077.9" y="177.6" font-family='"Liberation Sans", sans-serif' font-size="10" fill="#0000e0" text-anchor="end">5</text>
<circle cx="844.0" cy="437.3" r="4" fill="#3c3c3c"/>
<circle cx="979.9" cy="350.9" r="4" fill="#3c3c3c"/>
<circle cx="1059.8" cy="328.2" r="4" fill="#3c3c3c"/>
<circle cx="1330.0" cy="388.6" r="4" fill="#3c3c3c"/>
<circle cx="1277.8" cy="417.3" r="4" fill="#3c3c3c"/>
<circle cx="993" cy="286.2" r="4" fill="#3c3c3c"/>
<circle cx="1072.9" cy="263.3" r="4" fill="#3c3c3c"/>
<circle cx="1091.9" cy="307.2" r="4" fill="#3c3c3c"/>
<circle cx="1144.7" cy="278.6" r="7" fill="#1010e8"/>
<circle cx="1085.9" cy="389.0" r="7" fill="#1a1a90"/>
<circle cx="1157.4" cy="404.3" r="7" fill="#7878e8"/>
<circle cx="1105.0" cy="433.0" r="7" fill="#7878e8"/>
<circle cx="1005.7" cy="411.2" r="7" fill="#7878e8"/>
<text x="1078.9" y="272.2" font-family='"Liberation Sans", sans-serif' font-size="10" fill="#2a2ae8" text-anchor="end">3</text>
<text x="997" y="281" font-family='"Liberation Sans", sans-serif' font-size="11" fill="#444">I</text>
<text x="1076" y="258" font-family='"Liberation Sans", sans-serif' font-size="11" fill="#444">J</text>
<text x="1148" y="271" font-family='"Liberation Sans", sans-serif' font-size="11" fill="#2020f0">G</text>
<text x="1097" y="301" font-family='"Liberation Sans", sans-serif' font-size="11" fill="#444">H</text>
<text x="1090" y="381" font-family='"Liberation Sans", sans-serif' font-size="11" fill="#2020f0">A</text>
<text x="1160" y="396" font-family='"Liberation Sans", sans-serif' font-size="11" fill="#2020f0">B</text>
<text x="1108" y="425" font-family='"Liberation Sans", sans-serif' font-size="11" fill="#8c8cf0">C</text>
<text x="1010" y="404" font-family='"Liberation Sans", sans-serif' font-size="11" fill="#8c8cf0">D</text>
<text x="1072" y="415" font-family='"Liberation Sans", sans-serif' font-size="10" fill="#3a3ad8">0</text>
<text x="1077" y="410" font-family='"Liberation Sans", sans-serif' font-size="10" fill="#2a8a2a">0</text>
<text x="1179" y="392" font-family='"Liberation Sans", sans-serif' font-size="11" fill="#111">b</text>
<text x="1140" y="441" font-family='"Liberation Sans", sans-serif' font-size="11" fill="#111">c</text>
</g>
<path d="M1366 52 L1318.5 52 L1318.5 90 Q1318.5 95.5 1324 95.5 L1366 95.5" fill="#fff" stroke="#e0e0e0" stroke-width="1"/>
<rect x="1327" y="64.2" width="18" height="2.6" fill="#8a8a8a"/><rect x="1327" y="72.5" width="18" height="2.6" fill="#8a8a8a"/><rect x="1327" y="81.2" width="18" height="2.6" fill="#8a8a8a"/>
<polygon points="1346.3,65.5 1337.7,79.5 1343.7,82.1 1357.1,80.3" fill="#fff" stroke="#fff" stroke-width="4" stroke-linejoin="round"/>
<polygon points="1346.3,65.5 1337.7,79.5 1343.7,82.1" fill="#5a5aff" stroke="#333" stroke-width="0.9" stroke-linejoin="round"/>
<polygon points="1346.3,65.5 1343.7,82.1 1357.1,80.3" fill="#9696ff" stroke="#333" stroke-width="0.9" stroke-linejoin="round"/>
</svg>
</body></html>
